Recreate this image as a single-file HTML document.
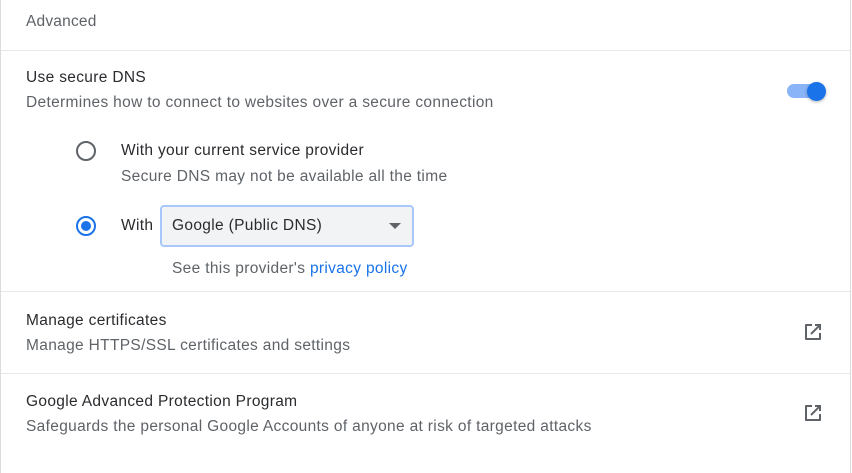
<!DOCTYPE html>
<html><head><style>
*{margin:0;padding:0;box-sizing:border-box}
body{width:852px;height:473px;background:#fff;position:relative;overflow:hidden;font-family:"Liberation Sans",Arial,sans-serif;}
.t{position:absolute;white-space:nowrap;font-size:15.5px;line-height:20px;letter-spacing:0.33px}
.p{color:#2a2b2e}.s{color:#5f6368}
.hr{position:absolute;left:1px;right:2px;height:1px;background:#e8e8e8}
.ext{position:absolute;width:20px;height:20px}
</style></head><body>
<div style="position:absolute;left:0;top:0;bottom:0;width:1px;background:#dadce0"></div>
<div style="position:absolute;left:850px;top:0;bottom:0;width:1px;background:#dadce0"></div>
<div class="t s" style="left:26px;top:12px;color:#5f6368;letter-spacing:0.2px">Advanced</div>
<div class="hr" style="top:50px"></div>
<div class="t p" style="left:26px;top:68px">Use secure DNS</div>
<div class="t s" style="left:26px;top:93px">Determines how to connect to websites over a secure connection</div>
<div style="position:absolute;left:787px;top:84px;width:30px;height:14px;border-radius:7px;background:#8ab4f8"></div>
<div style="position:absolute;left:807px;top:82px;width:19px;height:19px;border-radius:50%;background:#1a73e8;box-shadow:0 1px 3px rgba(0,0,0,.3)"></div>
<div style="position:absolute;left:76px;top:141px;width:20px;height:20px;border-radius:50%;border:2px solid #5f6368"></div>
<div class="t p" style="left:121px;top:141px">With your current service provider</div>
<div class="t s" style="left:121px;top:167px">Secure DNS may not be available all the time</div>
<div style="position:absolute;left:76px;top:216px;width:20px;height:20px;border-radius:50%;border:2px solid #1a73e8"></div>
<div style="position:absolute;left:81px;top:221px;width:10px;height:10px;border-radius:50%;background:#1a73e8"></div>
<div class="t p" style="left:121px;top:216px">With</div>
<div style="position:absolute;left:160px;top:205px;width:254px;height:42px;border:2px solid #a8c7fa;border-radius:4px;background:#f1f3f4"></div>
<div class="t p" style="left:172px;top:216px">Google (Public DNS)</div>
<div style="position:absolute;left:389px;top:223px;width:0;height:0;border-left:6px solid transparent;border-right:6px solid transparent;border-top:6px solid #5f6368"></div>
<div class="t s" style="left:172px;top:259px">See this provider's <span style="color:#1a73e8">privacy policy</span></div>
<div class="hr" style="top:291px"></div>
<div class="t p" style="left:26px;top:311px">Manage certificates</div>
<div class="t s" style="left:26px;top:336px">Manage HTTPS/SSL certificates and settings</div>
<svg class="ext" style="left:803px;top:322px" viewBox="0 0 20 20"><path d="M9 2H3a1 1 0 0 0-1 1v14a1 1 0 0 0 1 1h14a1 1 0 0 0 1-1v-6h-2v5H4V4h5z" fill="#5f6368"/><path d="M12 2v2h2.6L7.3 11.3l1.4 1.4L16 5.4V8h2V2z" fill="#5f6368"/></svg>
<div class="hr" style="top:373px"></div>
<div class="t p" style="left:26px;top:392px">Google Advanced Protection Program</div>
<div class="t s" style="left:26px;top:417px">Safeguards the personal Google Accounts of anyone at risk of targeted attacks</div>
<svg class="ext" style="left:803px;top:403px" viewBox="0 0 20 20"><path d="M9 2H3a1 1 0 0 0-1 1v14a1 1 0 0 0 1 1h14a1 1 0 0 0 1-1v-6h-2v5H4V4h5z" fill="#5f6368"/><path d="M12 2v2h2.6L7.3 11.3l1.4 1.4L16 5.4V8h2V2z" fill="#5f6368"/></svg>
</body></html>
